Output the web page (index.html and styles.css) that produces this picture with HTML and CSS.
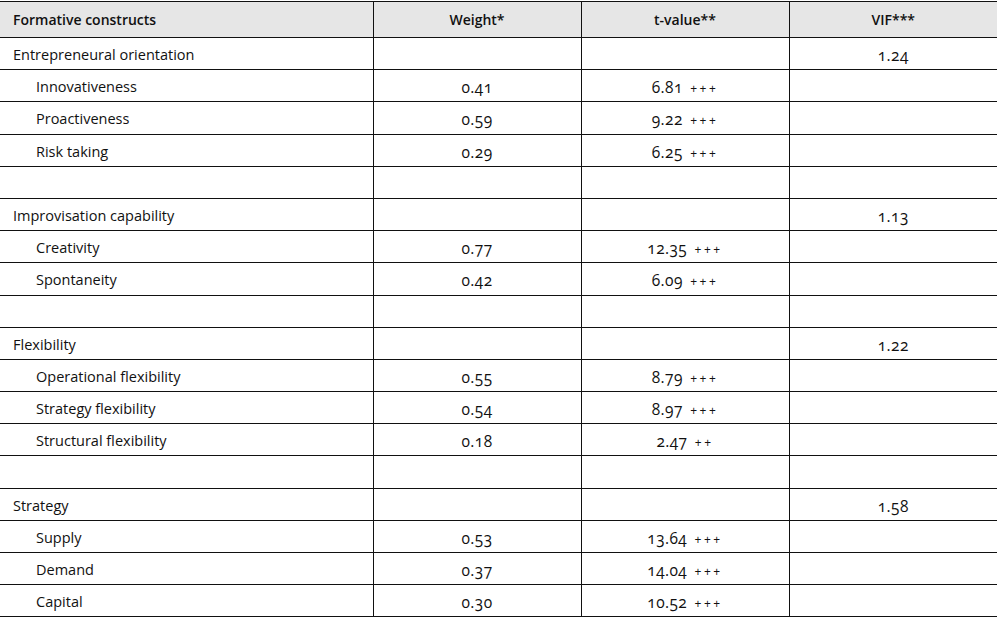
FILE: index.html
```html
<!DOCTYPE html>
<html>
<head>
<meta charset="utf-8">
<link rel="stylesheet" href="styles.css">
</head>
<body>
<table class="tbl">
  <colgroup>
    <col class="c-name"><col class="c-num"><col class="c-num"><col class="c-num">
  </colgroup>
  <thead>
    <tr class="head">
      <th class="name">Formative constructs</th>
      <th>Weight*</th>
      <th>t-value**</th>
      <th>VIF***</th>
    </tr>
  </thead>
  <tbody>
    <tr><td class="name">Entrepreneural orientation</td><td></td><td></td><td class="num">1.24</td></tr>
    <tr><td class="name sub">Innovativeness</td><td class="num">0.41</td><td class="num">6.81 <span class="sig">+++</span></td><td></td></tr>
    <tr><td class="name sub">Proactiveness</td><td class="num">0.59</td><td class="num">9.22 <span class="sig">+++</span></td><td></td></tr>
    <tr><td class="name sub">Risk taking</td><td class="num">0.29</td><td class="num">6.25 <span class="sig">+++</span></td><td></td></tr>
    <tr class="gap"><td class="name"></td><td></td><td></td><td></td></tr>
    <tr><td class="name">Improvisation capability</td><td></td><td></td><td class="num">1.13</td></tr>
    <tr><td class="name sub">Creativity</td><td class="num">0.77</td><td class="num">12.35 <span class="sig">+++</span></td><td></td></tr>
    <tr><td class="name sub">Spontaneity</td><td class="num">0.42</td><td class="num">6.09 <span class="sig">+++</span></td><td></td></tr>
    <tr class="gap"><td class="name"></td><td></td><td></td><td></td></tr>
    <tr><td class="name">Flexibility</td><td></td><td></td><td class="num">1.22</td></tr>
    <tr><td class="name sub">Operational flexibility</td><td class="num">0.55</td><td class="num">8.79 <span class="sig">+++</span></td><td></td></tr>
    <tr><td class="name sub">Strategy flexibility</td><td class="num">0.54</td><td class="num">8.97 <span class="sig">+++</span></td><td></td></tr>
    <tr><td class="name sub">Structural flexibility</td><td class="num">0.18</td><td class="num">2.47 <span class="sig">++</span></td><td></td></tr>
    <tr class="gap"><td class="name"></td><td></td><td></td><td></td></tr>
    <tr><td class="name">Strategy</td><td></td><td></td><td class="num">1.58</td></tr>
    <tr><td class="name sub">Supply</td><td class="num">0.53</td><td class="num">13.64 <span class="sig">+++</span></td><td></td></tr>
    <tr><td class="name sub">Demand</td><td class="num">0.37</td><td class="num">14.04 <span class="sig">+++</span></td><td></td></tr>
    <tr><td class="name sub">Capital</td><td class="num">0.30</td><td class="num">10.52 <span class="sig">+++</span></td><td></td></tr>
  </tbody>
</table>
</body>
</html>
```

FILE: styles.css
```css
html, body {
  margin: 0;
  padding: 0;
  background: #ffffff;
}

body {
  padding-top: 1px;
  font-family: "Open Sans", "Liberation Sans", sans-serif;
  font-size: 14.5px;
  color: #111111;
  font-variant-numeric: oldstyle-nums;
}

.tbl {
  width: 997px;
  border-collapse: collapse;
  table-layout: fixed;
  border-top: 1px solid #111;
}

.c-name { width: 373px; }
.c-num { width: 208px; }

.tbl th,
.tbl td {
  padding: 0;
  text-align: center;
  vertical-align: middle;
  border-bottom: 1px solid #111;
  border-left: 1px solid #111;
  font-weight: normal;
}

.tbl th.name,
.tbl td.name {
  border-left: none;
  text-align: left;
  padding-left: 13px;
}

.tbl td.sub {
  padding-left: 36px;
}

.head th {
  height: 35px;
  background: #e6e6e6;
  font-weight: 600;
  font-size: 14px;
}

.tbl tbody tr {
  height: 32.2px;
}

.tbl tbody td {
  padding-top: 2px;
}

.tbl td.num {
  font-size: 15.5px;
  padding-top: 3px;
  letter-spacing: 0.4px;
}

.sig {
  font-size: 12px;
  letter-spacing: 2.5px;
  margin-left: 3px;
}
```
